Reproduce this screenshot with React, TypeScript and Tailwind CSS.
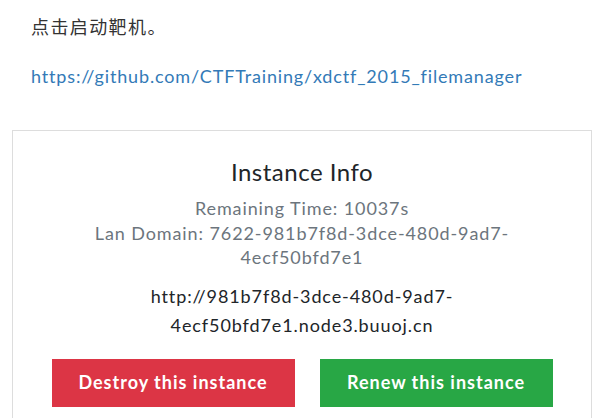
export default function App() {
  return (
    <div
      className="bg-white text-[#212529] text-[18px] leading-[27px] tracking-[0.9px]"
      style={{ fontFamily: 'Lato, "Noto Sans CJK SC", sans-serif' }}
    >
      <div className="pt-[14px] pl-[31px]">
        <p className="mb-[23px] tracking-[1.4px] text-[#333]">点击启动靶机。</p>
        <p className="-mt-[1px]">
          <a href="#" className="text-[#337ab7] tracking-[0.85px]">
            https://github.com/CTFTraining/xdctf_2015_filemanager
          </a>
        </p>
      </div>
      <div className="ml-[12px] mt-[40px] w-[580px] border border-[#dddddd] pt-[26px] pb-[20px] text-center">
        <h4 className="text-[24px] leading-[29px] mb-[10px] tracking-[0.5px]">Instance Info</h4>
        <div className="text-[#6c757d] leading-[24.5px]">
          <p>Remaining Time: 10037s</p>
          <p className="px-[60px]">Lan Domain: 7622-981b7f8d-3dce-480d-9ad7-4ecf50bfd7e1</p>
        </div>
        <p className="mt-[12px] px-[120px] leading-[29px] break-words">
          http://981b7f8d-3dce-480d-9ad7-4ecf50bfd7e1.node3.buuoj.cn
        </p>
        <div className="mt-[19px] flex justify-center gap-[25px]">
          <button className="w-[243px] h-[48px] bg-[#dc3545] text-white font-bold tracking-[1px]">
            Destroy this instance
          </button>
          <button className="w-[233px] h-[48px] bg-[#28a745] text-white font-bold tracking-[1px]">
            Renew this instance
          </button>
        </div>
      </div>
    </div>
  );
}
